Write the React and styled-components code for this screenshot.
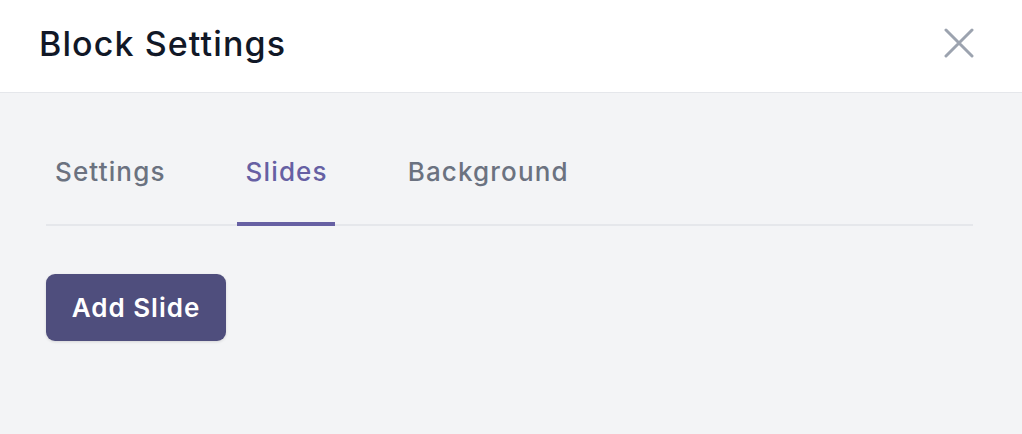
import React, { useState } from "react";
import styled, { createGlobalStyle } from "styled-components";

const Global = createGlobalStyle`
  html, body { margin: 0; padding: 0; background: #f3f4f6; }
  body { font-family: Inter, "Noto Sans", sans-serif; -webkit-font-smoothing: antialiased; }
`;

const Panel = styled.div`
  width: 1022px;
  height: 434px;
  display: flex;
  flex-direction: column;
  background: #f3f4f6;
`;

const Header = styled.header`
  height: 93px;
  box-sizing: border-box;
  display: flex;
  align-items: center;
  justify-content: space-between;
  padding: 0 46px 6px 39px;
  background: #ffffff;
  border-bottom: 1px solid #e5e7eb;
`;

const Title = styled.h2`
  margin: 0;
  font-size: 34px;
  font-weight: 500;
  color: #111827;
  letter-spacing: 1.1px;
`;

const CloseButton = styled.button`
  border: 0;
  background: none;
  padding: 0;
  width: 34px;
  height: 34px;
  display: flex;
  align-items: center;
  justify-content: center;
  color: #9ca3af;
  cursor: pointer;
`;

const Body = styled.div`
  padding: 46px 49px 0 46px;
`;

const TabList = styled.div`
  display: flex;
  gap: 64px;
  border-bottom: 2px solid #e5e7eb;
`;

const Tab = styled.button`
  border: 0;
  background: none;
  font-family: inherit;
  font-size: 26px;
  font-weight: 500;
  letter-spacing: 1.15px;
  padding: 18px 7px 35px 9px;
  margin-bottom: -2px;
  color: ${(p) => (p.$active ? "#6660a3" : "#6b7280")};
  border-bottom: 4px solid ${(p) => (p.$active ? "#6660a3" : "transparent")};
  cursor: pointer;
  line-height: 30px;
`;

const Content = styled.div`
  padding-top: 48px;
`;

const PrimaryButton = styled.button`
  width: 180px;
  height: 67px;
  border: 0;
  border-radius: 9px;
  background: #4f4e7d;
  color: #ffffff;
  font-family: inherit;
  font-size: 26px;
  font-weight: 600;
  letter-spacing: 1px;
  box-shadow: 0 1px 3px rgba(0, 0, 0, 0.12);
  cursor: pointer;
`;

export default function App() {
  const [tab, setTab] = useState("Slides");
  return (
    <Panel>
      <Global />
      <Header>
        <Title>Block Settings</Title>
        <CloseButton aria-label="Close">
          <svg width="30" height="30" viewBox="0 0 30 30" fill="none" stroke="currentColor" strokeWidth="3" strokeLinecap="round">
            <path d="M2 2L28 28M28 2L2 28" />
          </svg>
        </CloseButton>
      </Header>
      <Body>
        <TabList>
          {["Settings", "Slides", "Background"].map((t) => (
            <Tab key={t} $active={t === tab} onClick={() => setTab(t)}>
              {t}
            </Tab>
          ))}
        </TabList>
        <Content>
          <PrimaryButton>Add Slide</PrimaryButton>
        </Content>
      </Body>
    </Panel>
  );
}
